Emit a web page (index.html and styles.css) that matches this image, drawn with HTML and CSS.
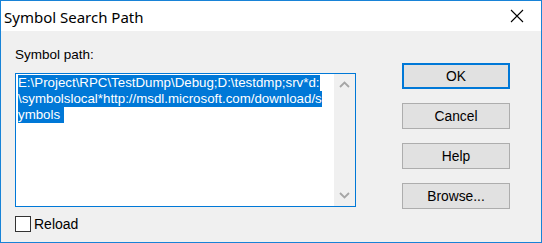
FILE: index.html
```html
<!doctype html>
<html lang="en">
<head>
  <meta charset="utf-8" />
  <title>Symbol Search Path</title>
  <link rel="stylesheet" href="styles.css">
</head>
<body>

  <div class="window">
    <div class="titlebar">
      <span class="title">Symbol Search Path</span>
      <button class="close-btn" aria-label="Close">
        <svg width="14" height="14" viewBox="0 0 14 14">
          <path d="M1 1 L13 13 M13 1 L1 13" stroke="#000" stroke-width="1.1" fill="none"/>
        </svg>
      </button>
    </div>

    <div class="dialog">
      <div class="left">
        <label class="field-label">Symbol path:</label>
        <div class="pathbox">
          <div class="path-text">
            <div class="line"><span class="sel">E:\Project\RPC\TestDump\Debug;D:\testdmp;srv*d:</span></div>
            <div class="line"><span class="sel">\symbolslocal*http://msdl.microsoft.com/download/s</span></div>
            <div class="line"><span class="sel">ymbols&nbsp;</span></div>
          </div>
          <div class="scrollbar">
            <svg class="arrow" width="21" height="21" viewBox="0 0 21 21">
              <path d="M6 13 L10.5 8.5 L15 13" stroke="#a6a6a6" stroke-width="1.8" fill="none"/>
            </svg>
            <svg class="arrow" width="21" height="21" viewBox="0 0 21 21">
              <path d="M6 8 L10.5 12.5 L15 8" stroke="#a6a6a6" stroke-width="1.8" fill="none"/>
            </svg>
          </div>
        </div>
        <label class="check">
          <span class="box"></span>
          <span>Reload</span>
        </label>
      </div>

      <div class="actions">
        <button class="btn default">OK</button>
        <button class="btn">Cancel</button>
        <button class="btn">Help</button>
        <button class="btn">Browse...</button>
      </div>
    </div>
  </div>

</body>
</html>
```

FILE: styles.css
```css
:root{
  --accent:#0078d7;
  --face:#f0f0f0;
  --btn:#e1e1e1;
  --btn-border:#adadad;
  font-family: "Liberation Sans", Arial, sans-serif;
}
*{ box-sizing:border-box; }
body{
  margin:0;
  background:#fff;
}

.window{
  width:542px;
  height:243px;
  border:1px solid #1883d7;
  display:flex;
  flex-direction:column;
  background:var(--face);
}

.titlebar{
  height:30px;
  background:#fff;
  display:flex;
  align-items:center;
  justify-content:space-between;
  padding-left:3px;
}
.title{
  font-family: "Noto Sans", "Open Sans", sans-serif;
  font-size:15px;
  color:#000;
  margin-top:1px;
}
.close-btn{
  width:46px;
  height:30px;
  border:0;
  background:transparent;
  display:flex;
  align-items:center;
  justify-content:center;
  padding:0;
  margin-right:1px;
}

.dialog{
  flex:1;
  display:flex;
  gap:46px;
  padding:16px 0 0 14px;
  font-size:13.5px;
  color:#000;
}

.left{
  width:341px;
  display:flex;
  flex-direction:column;
}
.field-label{
  display:block;
  line-height:16px;
  height:16px;
  margin-bottom:10px;
}

.pathbox{
  height:134px;
  border:1px solid var(--accent);
  background:#fff;
  display:flex;
}
.path-text{
  flex:1;
  padding:1px 0 0 2px;
  font-size:13.3px;
  line-height:16px;
  white-space:nowrap;
}
.line{ height:16px; }
.sel{
  display:inline-block;
  height:16px;
  background:var(--accent);
  color:#fff;
}
.scrollbar{
  width:21px;
  background:var(--face);
  display:flex;
  flex-direction:column;
  justify-content:space-between;
}
.arrow{ display:block; }

.check{
  display:flex;
  align-items:center;
  gap:3px;
  margin-top:9px;
  line-height:16px;
  font-size:14px;
}
.box{
  width:16px;
  height:16px;
  border:1px solid #333;
  background:#fff;
}

.actions{
  width:108px;
  padding-top:16px;
  display:flex;
  flex-direction:column;
  gap:14px;
}
.btn{
  height:26px;
  border:1px solid var(--btn-border);
  background:var(--btn);
  font-family:inherit;
  font-size:13.8px;
  color:#000;
  padding:0;
}
.btn.default{
  border:2px solid var(--accent);
}
```
